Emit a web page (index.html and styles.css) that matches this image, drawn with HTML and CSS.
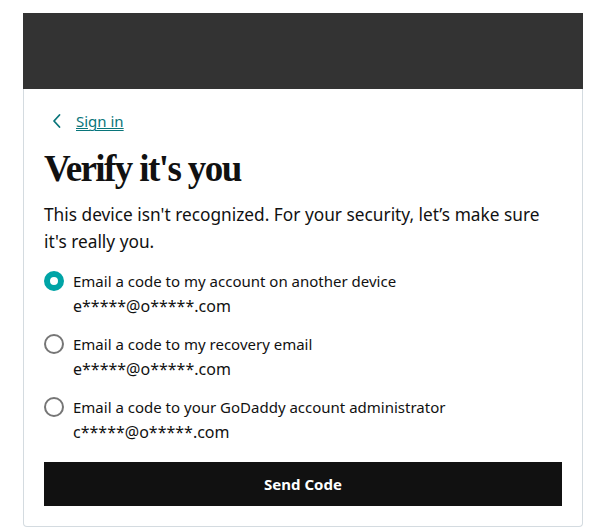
FILE: index.html
```html
<!DOCTYPE html>
<html lang="en">
<head>
    <meta charset="UTF-8">
    <meta name="viewport" content="width=device-width, initial-scale=1.0">
    <title>Verify it's you</title>
    <link rel="stylesheet" href="styles.css">
</head>
<body>
    <div class="card">
        <div class="top-bar"></div>
        <main class="content">
            <a class="back-link" href="#">
                <svg class="chevron" width="10" height="16" viewBox="0 0 10 16">
                    <path d="M7.5 2 L2 8 L7.5 14" fill="none" stroke="#09757a" stroke-width="1.8" stroke-linecap="round" stroke-linejoin="round"/>
                </svg>
                <span>Sign in</span>
            </a>
            <h1>Verify it's you</h1>
            <p class="intro">This device isn't recognized. For your security, let’s make sure it's really you.</p>

            <ul class="options">
                <li class="option">
                    <span class="radio checked"></span>
                    <div class="option-text">
                        <div>Email a code to my account on another device</div>
                        <div>e*****@o*****.com</div>
                    </div>
                </li>
                <li class="option">
                    <span class="radio"></span>
                    <div class="option-text">
                        <div>Email a code to my recovery email</div>
                        <div>e*****@o*****.com</div>
                    </div>
                </li>
                <li class="option">
                    <span class="radio"></span>
                    <div class="option-text">
                        <div>Email a code to your GoDaddy account administrator</div>
                        <div>c*****@o*****.com</div>
                    </div>
                </li>
            </ul>

            <button class="send-button">Send Code</button>
        </main>
    </div>
</body>
</html>
```

FILE: styles.css
```css
body {
    font-family: "Noto Sans", Arial, sans-serif;
    background-color: #fff;
    color: #111;
    margin: 0;
    padding: 13px 0 0 23px;
}
.card {
    width: 558px;
    border: 1px solid #d4dbe0;
    border-top: none;
    border-radius: 0 0 4px 4px;
}
.top-bar {
    height: 76px;
    background: #333;
    margin: 0 -1px;
}
.content {
    padding: 22px 20px 20px;
}
.back-link {
    display: flex;
    align-items: center;
    gap: 14px;
    padding-left: 8px;
    color: #09757a;
    font-size: 15px;
    line-height: 20px;
}
.back-link span {
    text-decoration: underline;
    text-underline-offset: 3px;
}
h1 {
    font-family: "Liberation Serif", "Times New Roman", serif;
    font-weight: bold;
    font-size: 37px;
    line-height: 44px;
    letter-spacing: -1.6px;
    margin: 16px 0 10px;
}
.intro {
    font-size: 17.3px;
    line-height: 27px;
    margin: 0 0 14px;
}
.options {
    list-style-type: none;
    padding: 0;
    margin: 0 0 17px;
}
.option {
    display: flex;
    gap: 9px;
    margin-bottom: 13px;
    font-size: 15px;
    line-height: 25px;
}
.option-text div:last-child {
    font-size: 16px;
}
.radio {
    flex: none;
    width: 16px;
    height: 16px;
    margin-top: 2px;
    border: 2px solid #767676;
    border-radius: 50%;
}
.radio.checked {
    width: 8px;
    height: 8px;
    border: 6px solid #00a4a6;
}
.send-button {
    display: block;
    width: 100%;
    height: 44px;
    background: #111;
    color: #fff;
    border: none;
    font-family: "Noto Sans", Arial, sans-serif;
    font-size: 15px;
    font-weight: bold;
    cursor: pointer;
}
```
